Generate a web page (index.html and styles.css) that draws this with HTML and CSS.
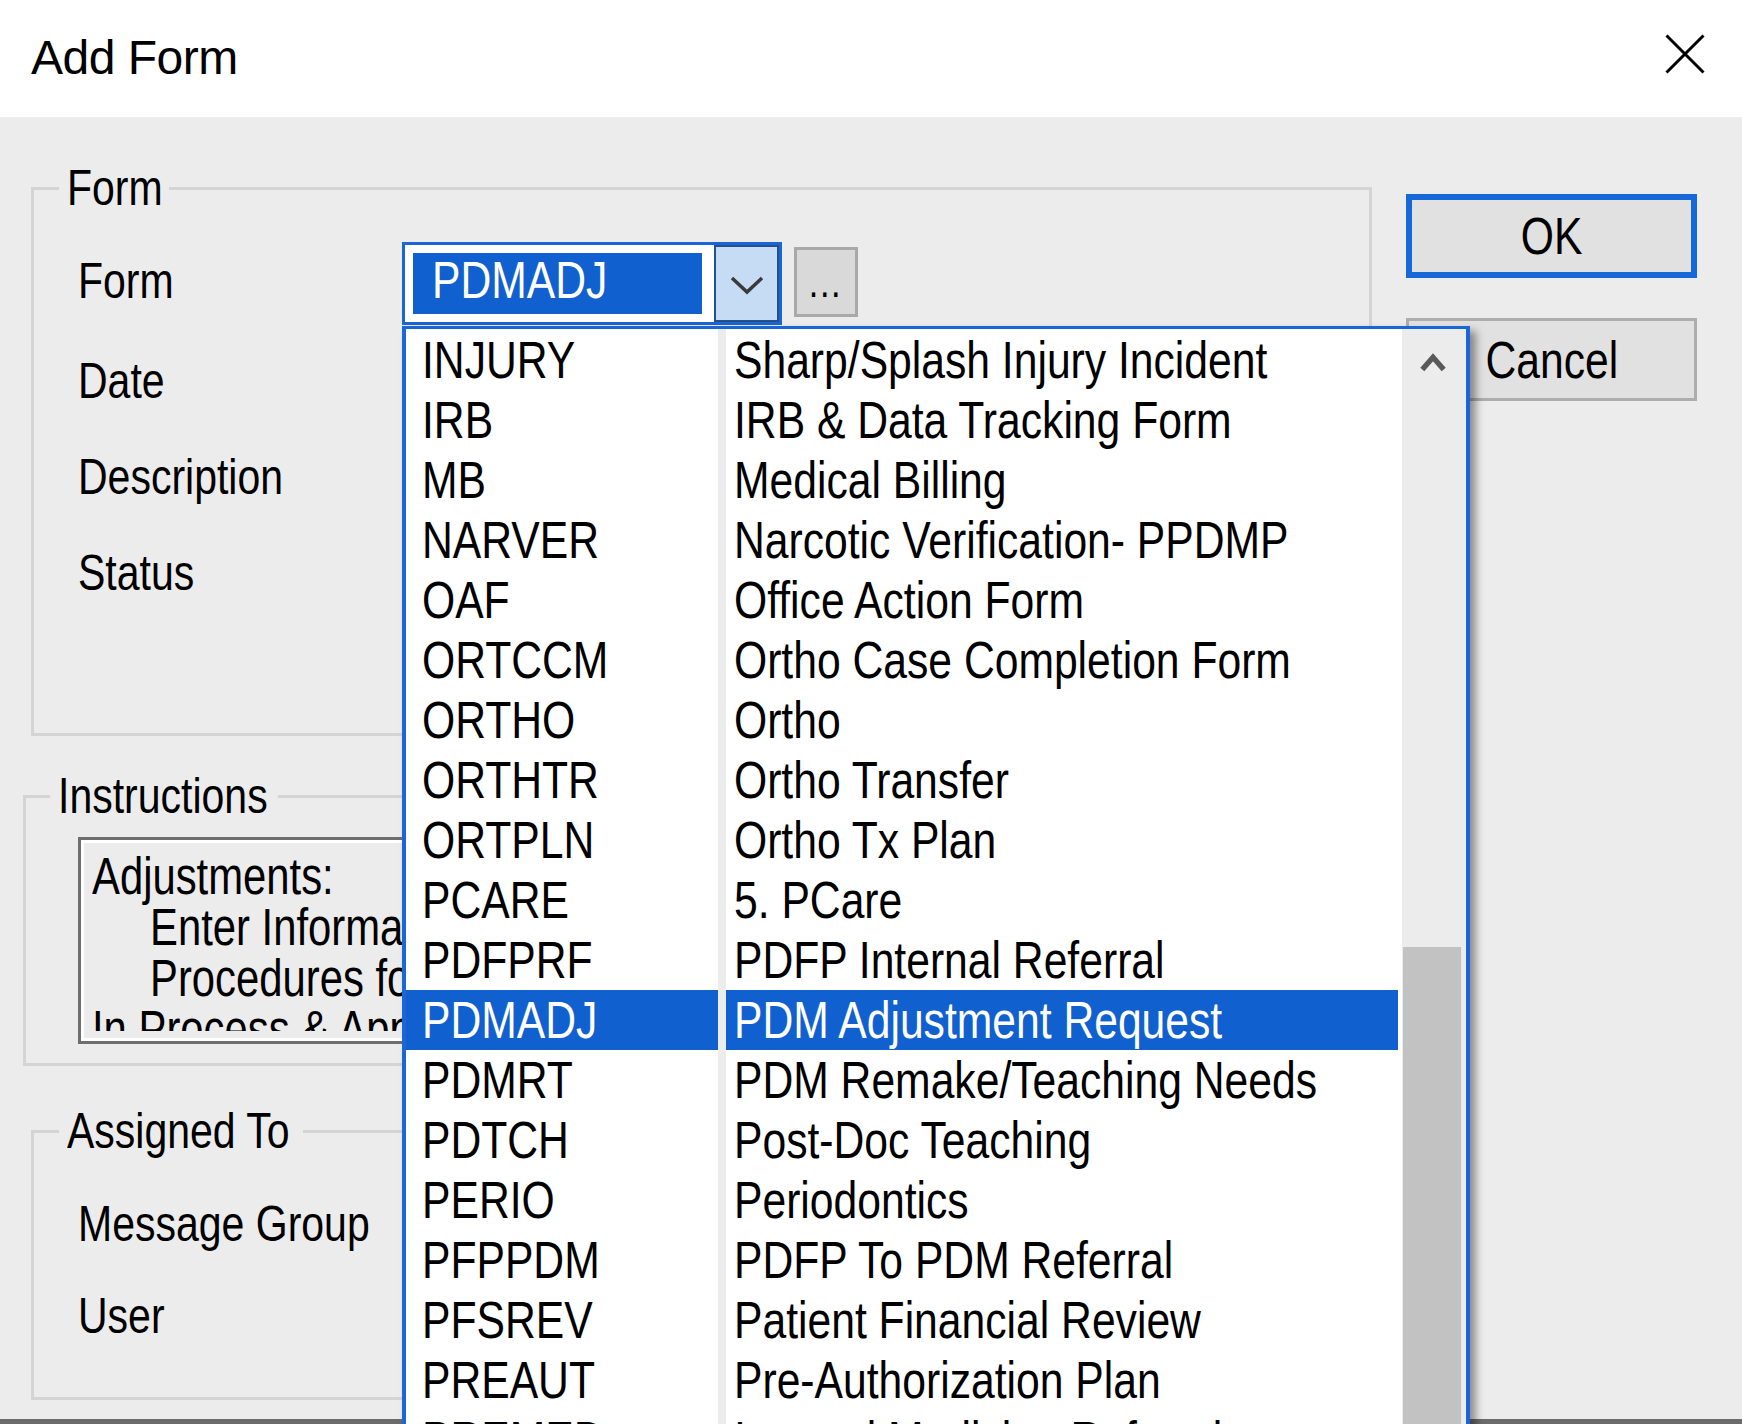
FILE: index.html
```html
<!DOCTYPE html>
<html lang="en">
<head>
<meta charset="utf-8">
<title>Add Form</title>
<link rel="stylesheet" href="styles.css">
</head>
<body>
<div class="window">
  <header class="titlebar">
    <span class="title">Add Form</span>
    <svg class="close" width="40" height="40" viewBox="0 0 40 40"><path d="M1.5 1.5L38.5 38.5M38.5 1.5L1.5 38.5" stroke="#000" stroke-width="3" fill="none"/></svg>
  </header>
  <main class="dlg">
    <div class="left">
      <fieldset class="group group-form">
        <legend class="lg-form"><span class="t">Form</span></legend>
        <div class="inner inner-form">
          <div class="row-form">
            <span class="lbl lbl-first"><span class="t">Form</span></span>
            <div class="combo">
              <span class="combo-value"><span class="t">PDMADJ</span></span>
              <span class="combo-btn"><svg width="34" height="20" viewBox="0 0 34 20"><polyline points="2,3 17,17 32,3" fill="none" stroke="#3a3a3a" stroke-width="3.5"/></svg></span>
            </div>
            <span class="ellipsis"><span class="t">...</span></span>
          </div>
          <div class="lbl lbl-date"><span class="t">Date</span></div>
          <div class="lbl lbl-next"><span class="t">Description</span></div>
          <div class="lbl lbl-next"><span class="t">Status</span></div>
        </div>
      </fieldset>
      <fieldset class="group group-instr">
        <legend class="lg-instr"><span class="t">Instructions</span></legend>
        <div class="inner inner-instr">
          <div class="textbox">
            <div class="tb-content">
              <div class="tline"><span class="t">Adjustments:</span></div>
              <div class="tline indent"><span class="t">Enter Information for adjustment requests</span></div>
              <div class="tline indent"><span class="t">Procedures for PDM patients</span></div>
              <div class="tline"><span class="t">In Process &amp; Approved Adjustments</span></div>
            </div>
          </div>
        </div>
      </fieldset>
      <fieldset class="group group-assigned">
        <legend class="lg-assigned"><span class="t">Assigned To</span></legend>
        <div class="inner inner-assigned">
          <div class="lbl"><span class="t">Message Group</span></div>
          <div class="lbl lbl-user"><span class="t">User</span></div>
        </div>
      </fieldset>
    </div>
    <div class="right">
      <div class="btn btn-ok"><span class="t">OK</span></div>
      <div class="btn btn-cancel"><span class="t">Cancel</span></div>
    </div>
  </main>
  <div class="dropdown">
    <div class="dd-rows">
      <div class="dd-row"><span class="c1"><span class="t">INJURY</span></span><span class="c2"><span class="t">Sharp/Splash Injury Incident</span></span></div>
      <div class="dd-row"><span class="c1"><span class="t">IRB</span></span><span class="c2"><span class="t">IRB &amp; Data Tracking Form</span></span></div>
      <div class="dd-row"><span class="c1"><span class="t">MB</span></span><span class="c2"><span class="t">Medical Billing</span></span></div>
      <div class="dd-row"><span class="c1"><span class="t">NARVER</span></span><span class="c2"><span class="t">Narcotic Verification- PPDMP</span></span></div>
      <div class="dd-row"><span class="c1"><span class="t">OAF</span></span><span class="c2"><span class="t">Office Action Form</span></span></div>
      <div class="dd-row"><span class="c1"><span class="t">ORTCCM</span></span><span class="c2"><span class="t">Ortho Case Completion Form</span></span></div>
      <div class="dd-row"><span class="c1"><span class="t">ORTHO</span></span><span class="c2"><span class="t">Ortho</span></span></div>
      <div class="dd-row"><span class="c1"><span class="t">ORTHTR</span></span><span class="c2"><span class="t">Ortho Transfer</span></span></div>
      <div class="dd-row"><span class="c1"><span class="t">ORTPLN</span></span><span class="c2"><span class="t">Ortho Tx Plan</span></span></div>
      <div class="dd-row"><span class="c1"><span class="t">PCARE</span></span><span class="c2"><span class="t">5. PCare</span></span></div>
      <div class="dd-row"><span class="c1"><span class="t">PDFPRF</span></span><span class="c2"><span class="t">PDFP Internal Referral</span></span></div>
      <div class="dd-row selected"><span class="c1"><span class="t">PDMADJ</span></span><span class="c2"><span class="t">PDM Adjustment Request</span></span></div>
      <div class="dd-row"><span class="c1"><span class="t">PDMRT</span></span><span class="c2"><span class="t">PDM Remake/Teaching Needs</span></span></div>
      <div class="dd-row"><span class="c1"><span class="t">PDTCH</span></span><span class="c2"><span class="t">Post-Doc Teaching</span></span></div>
      <div class="dd-row"><span class="c1"><span class="t">PERIO</span></span><span class="c2"><span class="t">Periodontics</span></span></div>
      <div class="dd-row"><span class="c1"><span class="t">PFPPDM</span></span><span class="c2"><span class="t">PDFP To PDM Referral</span></span></div>
      <div class="dd-row"><span class="c1"><span class="t">PFSREV</span></span><span class="c2"><span class="t">Patient Financial Review</span></span></div>
      <div class="dd-row"><span class="c1"><span class="t">PREAUT</span></span><span class="c2"><span class="t">Pre-Authorization Plan</span></span></div>
      <div class="dd-row"><span class="c1"><span class="t">PREMED</span></span><span class="c2"><span class="t">Internal Medicine Referral</span></span></div>
    </div>
    <div class="dd-scroll">
      <svg class="up" width="34" height="26" viewBox="0 0 34 26"><polyline points="3,23 17,7 31,23" fill="none" stroke="#595959" stroke-width="7"/></svg>
      <div class="thumb"></div>
    </div>
  </div>
</div>
</body>
</html>
```

FILE: styles.css
```css
* { box-sizing: border-box; }

html, body {
  margin: 0;
  padding: 0;
  background: #ececec;
}

body {
  font-family: "Liberation Sans", Arial, sans-serif;
  color: #000;
}

/* condensed look of the upscaled system font */
.t {
  display: inline-block;
  white-space: nowrap;
  transform: scaleX(0.82);
  transform-origin: 0 50%;
}

.window {
  position: relative;
  width: 1742px;
  height: 1424px;
  overflow: hidden;
  background: #ececec;
}

.titlebar {
  height: 117px;
  background: #fff;
  display: flex;
  align-items: center;
  justify-content: space-between;
  padding: 0 37px 0 31px;
}

.title {
  font-size: 48px;
  letter-spacing: -0.5px;
  line-height: 1;
  margin-bottom: 2px;
}

.close {
  display: block;
  margin-bottom: 10px;
}

.dlg {
  height: 1307px;
  display: flex;
  align-items: flex-start;
  border-bottom: 5px solid #6b6b6b;
}

.left {
  width: 1372px;
  padding-top: 46px;
  display: flex;
  flex-direction: column;
  align-items: flex-start;
}

.group {
  margin: 0;
  padding: 0;
  min-width: 0;
  border: 3px solid #d4d4d4;
}

.group legend {
  font-size: 50px;
  line-height: 50px;
  padding: 0 8px;
  margin-left: 25px;
  white-space: nowrap;
  overflow: visible;
}

.lg-form { width: 110px; }
.lg-instr { width: 228px; }
.lg-assigned { width: 244px; }

.group-form {
  margin-left: 31px;
  width: 1341px;
}

.group-instr {
  margin-top: 35px;
  margin-left: 23px;
  width: 1349px;
}

.group-instr legend { margin-left: 24px; }

.group-assigned {
  margin-top: 40px;
  margin-left: 31px;
  width: 1341px;
}

.inner-form { padding: 29px 0 130px 44px; }
.inner-instr { padding: 16px 0 19px 52px; }
.inner-assigned { padding: 38px 0 51px 44px; }

.lbl {
  font-size: 50px;
  line-height: 60px;
  height: 60px;
  white-space: nowrap;
}

.row-form {
  display: flex;
  align-items: flex-start;
  height: 83px;
}

.lbl-first {
  width: 324px;
  flex: none;
  margin-top: 9px;
}

.lbl-date { margin-top: 26px; }
.lbl-next { margin-top: 36px; }
.lbl-user { margin-top: 32px; }

.combo {
  width: 380px;
  height: 83px;
  flex: none;
  border: 3px solid #1a66d6;
  background: #fff;
  display: flex;
  align-items: stretch;
}

.combo-value {
  margin: 8px 0 8px 8px;
  width: 289px;
  background: #1160d0;
  color: #fff;
  font-size: 52px;
  line-height: 55px;
  padding-left: 19px;
  overflow: hidden;
}

.combo-btn {
  margin-left: 12px;
  width: 65px;
  background: #c6dcf4;
  border: 2px solid #24508c;
  display: flex;
  align-items: center;
  justify-content: center;
}

.combo-btn svg { display: block; margin-top: 2px; }

.ellipsis {
  margin-left: 12px;
  margin-top: 5px;
  width: 64px;
  height: 70px;
  flex: none;
  border: 3px solid #a9a9a9;
  background: #d9d9d9;
  font-size: 42px;
  line-height: 66px;
  text-align: center;
  letter-spacing: 2px;
}

.ellipsis .t { transform-origin: 50% 50%; }

.textbox {
  width: 1240px;
  height: 207px;
  border: 3px solid #6e6e6e;
  box-shadow: inset 0 0 0 3px #fff;
  background: #ececec;
  padding: 11px 0 0 11px;
}

.tb-content {
  height: 180px;
  overflow: hidden;
}

.tline {
  font-size: 51px;
  line-height: 51px;
  white-space: nowrap;
}

.tline.indent { padding-left: 58px; }

.right {
  margin-left: 34px;
  margin-top: 77px;
  display: flex;
  flex-direction: column;
  gap: 40px;
}

.btn {
  width: 291px;
  background: #e1e1e1;
  font-size: 52px;
  display: flex;
  align-items: center;
  justify-content: center;
}

.btn .t { transform-origin: 50% 50%; }

.btn-ok {
  height: 84px;
  border: 6px solid #1667d8;
}

.btn-cancel {
  height: 83px;
  border: 3px solid #adadad;
}

.dropdown {
  position: absolute;
  left: 402px;
  top: 326px;
  width: 1068px;
  height: 1160px;
  background: #fff;
  border: 4px solid #1a66d6;
  border-top-width: 3px;
  display: flex;
  box-shadow: 6px 5px 8px rgba(0, 0, 0, 0.4);
  z-index: 5;
}

.dd-rows {
  flex: 1;
  padding-top: 1px;
  background: linear-gradient(to right, #fff 312px, #ececec 312px, #ececec 320px, #fff 320px);
}

.dd-row {
  display: grid;
  grid-template-columns: 312px 672px;
  column-gap: 8px;
  height: 60px;
  font-size: 52px;
  line-height: 60px;
  white-space: nowrap;
}

.dd-row > span { overflow: hidden; }
.dd-row .c1 { padding-left: 16px; }
.dd-row .c2 { padding-left: 8px; }

.dd-row.selected > span {
  background: #1160d0;
  color: #fff;
}

.dd-scroll {
  width: 64px;
  background: #ececec;
  display: flex;
  flex-direction: column;
  align-items: flex-start;
}

.dd-scroll .up {
  display: block;
  margin: 23px 0 0 14px;
}

.thumb {
  margin-top: 575px;
  margin-left: 1px;
  width: 58px;
  height: 700px;
  background: #c2c2c2;
}
```
